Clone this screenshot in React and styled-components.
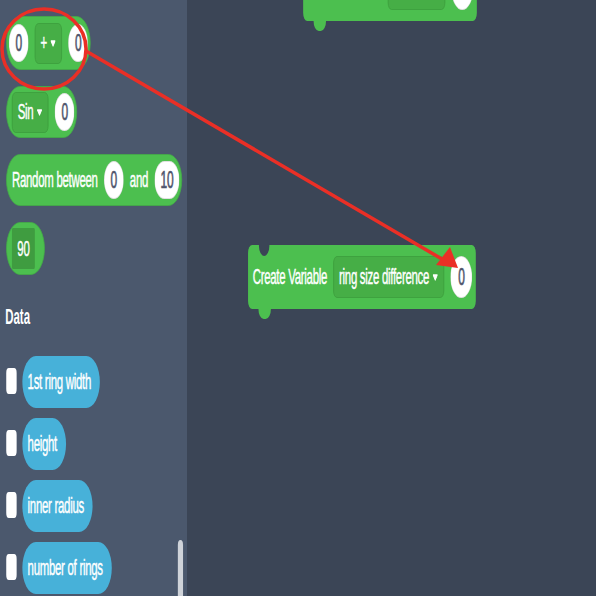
import React from 'react';
import styled, { createGlobalStyle, css } from 'styled-components';

// the reference is squeezed horizontally, so the stage is laid out at its
// natural width and then squeezed back with one scaleX
const SQUEEZE = 0.52;
const PAGE = 596;

const GREEN = '#4cbf4f';
const GREEN_DARK = '#46ae46';
const GREEN_EDGE = '#3b9c3c';
const WORKSPACE = '#3b4556';

const blockText = css`
  font-size: 22px;
  letter-spacing: -0.55px;
  -webkit-text-stroke: 0.45px currentColor;
  white-space: nowrap;
`;

const GlobalStyle = createGlobalStyle`
  html, body {
    margin: 0;
    padding: 0;
    background: ${WORKSPACE};
    overflow: hidden;
  }
  body {
    font-family: "Liberation Sans", Arial, sans-serif;
  }
`;

const Frame = styled.div`
  position: relative;
  width: ${PAGE}px;
  height: ${PAGE}px;
  overflow: hidden;
`;

const Stage = styled.div`
  display: flex;
  width: ${PAGE / SQUEEZE}px;
  height: ${PAGE}px;
  transform: scaleX(${SQUEEZE});
  transform-origin: 0 0;
`;

const Palette = styled.aside`
  position: relative;
  flex: 0 0 360px;
  background: #4b586d;
  overflow: hidden;
`;

const PaletteScroll = styled.div`
  display: flex;
  flex-direction: column;
  align-items: flex-start;
  padding-left: 12px;
  margin-top: -52px;
`;

const BlockStack = styled.div`
  display: flex;
  flex-direction: column;
  align-items: flex-start;
  gap: 16px;
`;

const Reporter = styled.div`
  display: flex;
  align-items: center;
  gap: 12px;
  height: ${({ $h }) => $h || 52}px;
  min-width: ${({ $min }) => $min || 0}px;
  padding: 0 ${({ $right }) => $right ?? 4}px 0 ${({ $left }) => $left ?? 4}px;
  box-sizing: border-box;
  background: ${GREEN};
  border: 1px solid #44ad46;
  border-radius: 27px;
  color: #fff;
  ${blockText}
`;

const Oval = styled.span`
  display: inline-flex;
  align-items: center;
  justify-content: center;
  min-width: ${({ $size }) => $size || 38}px;
  height: ${({ $size }) => $size || 38}px;
  padding: 0 11px;
  box-sizing: border-box;
  border-radius: 21px;
  background: #fff;
  border: 1px solid rgba(0, 0, 0, 0.12);
  color: #4f556c;
  ${blockText}
  font-size: 23px;
  -webkit-text-stroke: 0.7px currentColor;
`;

const Dropdown = styled.span`
  display: inline-flex;
  align-items: center;
  gap: 7px;
  width: ${({ $w }) => ($w ? `${$w}px` : 'auto')};
  height: ${({ $tall }) => ($tall ? 42 : 41)}px;
  padding: 0 11px 0 10px;
  box-sizing: border-box;
  justify-content: flex-end;
  background: ${GREEN_DARK};
  border: 1px solid ${GREEN_EDGE};
  border-radius: 7px;
  color: #fff;
`;

const Field = styled.span`
  display: inline-flex;
  align-items: center;
  justify-content: center;
  width: 44px;
  height: 41px;
  background: #3f9c40;
  border-radius: 2px;
  color: #fff;
`;

const CategoryLabel = styled.div`
  margin: 29px 0 27px -2px;
  color: #fff;
  font-size: 22px;
  font-weight: bold;
  line-height: 25px;
`;

const VarList = styled.div`
  display: flex;
  flex-direction: column;
  gap: 10px;
`;

const VarRow = styled.div`
  display: flex;
  align-items: center;
  gap: 11px;
`;

const Checkbox = styled.span`
  width: 20px;
  height: 26px;
  border-radius: 5px;
  background: #fff;
  margin-top: -2px;
`;

const VarPill = styled.div`
  display: flex;
  align-items: center;
  height: 52px;
  padding: 0 17px 0 10px;
  border-radius: 26px;
  background: #47b1d9;
  color: #fff;
  ${blockText}
`;

const Scrollbar = styled.div`
  position: absolute;
  top: 540px;
  bottom: -10px;
  right: 8px;
  width: 10px;
  border-radius: 5px;
  background: #cfd3d9;
`;

const Workspace = styled.main`
  position: relative;
  flex: 1;
  background: ${WORKSPACE};
  overflow: hidden;
`;

const StackBlock = styled.div`
  position: absolute;
  left: ${({ $x }) => $x}px;
  top: ${({ $y }) => $y}px;
  display: flex;
  align-items: center;
  gap: 12px;
  width: ${({ $w }) => ($w ? `${$w}px` : 'auto')};
  height: 64px;
  padding: 0 7px 0 9px;
  box-sizing: border-box;
  background: ${GREEN};
  border-radius: 8px;
  color: #fff;
  ${blockText}

  &::before {
    content: '';
    position: absolute;
    top: 0;
    left: 21px;
    width: 20px;
    height: 11px;
    background: ${WORKSPACE};
    border-radius: 0 0 10px 10px;
  }

  &::after {
    content: '';
    position: absolute;
    top: 100%;
    left: 20px;
    width: 24px;
    height: 10px;
    background: ${GREEN};
    border-radius: 0 0 12px 12px;
  }
`;

const Label = styled.span`
  flex: ${({ $grow }) => ($grow ? 1 : 'none')};
  padding-left: ${({ $indent }) => $indent || 0}px;
`;

const Annotation = styled.svg`
  position: absolute;
  inset: 0;
  width: ${PAGE}px;
  height: ${PAGE}px;
  pointer-events: none;
`;

const Caret = () => (
  <svg width="10" height="7" viewBox="0 0 10 7">
    <path d="M1 1 L9 1 L5 6 Z" fill="#fff" stroke="#fff" strokeWidth="1.5" strokeLinejoin="round" />
  </svg>
);

const Menu = ({ children, tall, width }) => (
  <Dropdown $tall={tall} $w={width}>
    {children && <span>{children}</span>}
    <Caret />
  </Dropdown>
);

const variables = ['1st ring width', 'height', 'inner radius', 'number of rings'];

export default function App() {
  return (
    <Frame>
      <GlobalStyle />
      <Stage>
        <Palette>
          <PaletteScroll>
            <BlockStack>
              <Reporter $min={124} />
              <Reporter $h={54}>
                <Oval>0</Oval>
                <Menu>+</Menu>
                <Oval>0</Oval>
              </Reporter>
              <Reporter $left={10}>
                <Menu>Sin</Menu>
                <Oval>0</Oval>
              </Reporter>
              <Reporter $left={10}>
                <span>Random between</span>
                <Oval>0</Oval>
                <span>and</span>
                <Oval>10</Oval>
              </Reporter>
              <Reporter $left={10} $right={18} $h={53}>
                <Field>90</Field>
              </Reporter>
            </BlockStack>
            <CategoryLabel>Data</CategoryLabel>
            <VarList>
              {variables.map((name) => (
                <VarRow key={name}>
                  <Checkbox />
                  <VarPill>{name}</VarPill>
                </VarRow>
              ))}
            </VarList>
          </PaletteScroll>
          <Scrollbar />
        </Palette>
        <Workspace>
          <StackBlock $x={223} $y={-43} $w={334}>
            <Label $grow $indent={6}>Set Variable</Label>
            <Menu tall width={110} />
            <Oval $size={42} />
          </StackBlock>
          <StackBlock $x={117} $y={245}>
            <Label>Create Variable</Label>
            <Menu tall>ring size difference</Menu>
            <Oval $size={42}>0</Oval>
          </StackBlock>
        </Workspace>
      </Stage>
      <Annotation viewBox="0 0 596 596">
        <ellipse cx="44" cy="49" rx="42" ry="40" fill="none" stroke="#ea2f26" strokeWidth="3.5" />
        <line x1="86" y1="51" x2="447" y2="262" stroke="#ea2f26" strokeWidth="3.5" />
        <polygon points="458,268 436,265 450,247" fill="#ea2f26" />
      </Annotation>
    </Frame>
  );
}
